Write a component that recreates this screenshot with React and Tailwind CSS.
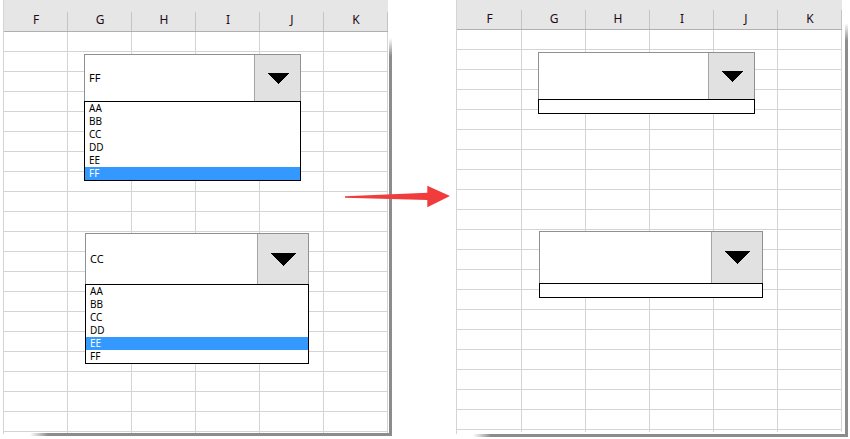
import React from 'react';

const COLS = ['F', 'G', 'H', 'I', 'J', 'K'];
const ROWS = Array.from({ length: 20 }, (_, i) => i);
const ITEMS = ['AA', 'BB', 'CC', 'DD', 'EE', 'FF'];

const font = { fontFamily: '"Noto Sans", "DejaVu Sans", sans-serif' };

function Arrow({ w, h }) {
  return (
    <svg width={w} height={h} viewBox={`0 0 ${w} ${h}`} shapeRendering="crispEdges">
      <polygon points={`0,0 ${w},0 ${w / 2},${h}`} fill="#000" />
    </svg>
  );
}

// combo box + its drop list, floating over the sheet
function Combo({ pos, boxH, btnW, arrowW, arrowH, value, items, selected }) {
  return (
    <div className={`absolute ${pos}`}>
      <div className={`flex bg-white border-t border-x border-[#8e9094] ${boxH}`}>
        <div className="flex-1 flex items-center pl-[4px] text-[11px] text-black">{value}</div>
        <div className={`${btnW} shrink-0 bg-[#e1e1e1] border-l border-[#a5a5a5] flex items-center justify-center`}>
          <Arrow w={arrowW} h={arrowH} />
        </div>
      </div>
      <div className="border border-black bg-white">
        {items.length === 0 && <div className="h-[13px]" />}
        {items.map((it) => (
          <div
            key={it}
            className={`h-[13px] leading-[13px] pl-[4px] text-[10px] ${it === selected ? 'bg-[#3399ff] text-white' : 'text-black'}`}
          >
            {it}
          </div>
        ))}
      </div>
    </div>
  );
}

function Sheet({ firstW, headerH, sepTop, labelPt, className, children }) {
  const widths = COLS.map((_, i) => (i === 0 ? firstW : 'w-[64px]'));
  return (
    <div className={`relative shrink-0 flex flex-col border-l border-[#d4d4d4] ${className}`}>
      <div className={`flex bg-[#e6e6e6] border-b border-[#b0b0b0] ${headerH}`}>
        {COLS.map((c, i) => (
          <div key={c} className={`relative shrink-0 h-full flex justify-center text-[12px] leading-[16px] text-[#1e0a16] ${widths[i]} ${labelPt}`}>
            {c}
            <span className={`absolute right-0 bottom-0 w-px bg-[#c4c4c4] ${sepTop}`} />
          </div>
        ))}
      </div>
      {ROWS.map((r) => (
        <div key={r} className="flex">
          {COLS.map((c, i) => (
            <div key={c} className={`shrink-0 h-[20px] border-r border-b border-[#d4d4d4] ${widths[i]}`} />
          ))}
        </div>
      ))}
      <div className="flex">
        {COLS.map((c, i) => (
          <div key={c} className={`shrink-0 h-[2px] border-r border-[#d4d4d4] ${widths[i]}`} />
        ))}
      </div>
      {children}
    </div>
  );
}

export default function App() {
  return (
    <div className="relative w-[850px] h-[439px] bg-white overflow-hidden" style={font}>
      <div className="flex">
        <Sheet firstW="w-[64px]" headerH="h-[32px]" sepTop="top-[12px]" labelPt="pt-[12px]" className="ml-[3px]">
          <Combo pos="left-[80px] top-[54px] w-[217px]" boxH="h-[47px]" btnW="w-[46px]" arrowW={22} arrowH={11} value="FF" items={ITEMS} selected="FF" />
          <Combo pos="left-[81px] top-[233px] w-[224px]" boxH="h-[51px]" btnW="w-[51px]" arrowW={25} arrowH={13} value="CC" items={ITEMS} selected="EE" />
          <div className="absolute left-[385px] top-[38px] w-[3px] h-[398px] bg-[linear-gradient(to_bottom,transparent,#8c8c8c_18px)]" />
          <div className="absolute left-[26px] top-[433px] w-[362px] h-[3px] bg-[linear-gradient(to_right,transparent,#8c8c8c_18px)]" />
        </Sheet>

        <Sheet firstW="w-[65px]" headerH="h-[30px]" sepTop="top-[10px]" labelPt="pt-[11px]" className="ml-[68px]">
          <Combo pos="left-[81px] top-[52px] w-[217px]" boxH="h-[47px]" btnW="w-[46px]" arrowW={22} arrowH={11} value="" items={[]} />
          <Combo pos="left-[82px] top-[231px] w-[224px]" boxH="h-[52px]" btnW="w-[51px]" arrowW={25} arrowH={13} value="" items={[]} />
          <div className="absolute left-[388px] top-[23px] w-[3px] h-[414px] bg-[linear-gradient(to_bottom,transparent,#8c8c8c_18px)]" />
          <div className="absolute left-[16px] top-[434px] w-[375px] h-[3px] bg-[linear-gradient(to_right,transparent,#8c8c8c_18px)]" />
        </Sheet>
      </div>

      {/* red arrow between the two sheets */}
      <svg className="absolute left-[340px] top-[180px]" width="115" height="32" viewBox="0 0 115 32">
        <polygon points="5,16.3 87.3,12.7 87.3,5.7 110,16 87.3,27.3 87.3,20 5,17.8" fill="#f03c3c" />
      </svg>
    </div>
  );
}
